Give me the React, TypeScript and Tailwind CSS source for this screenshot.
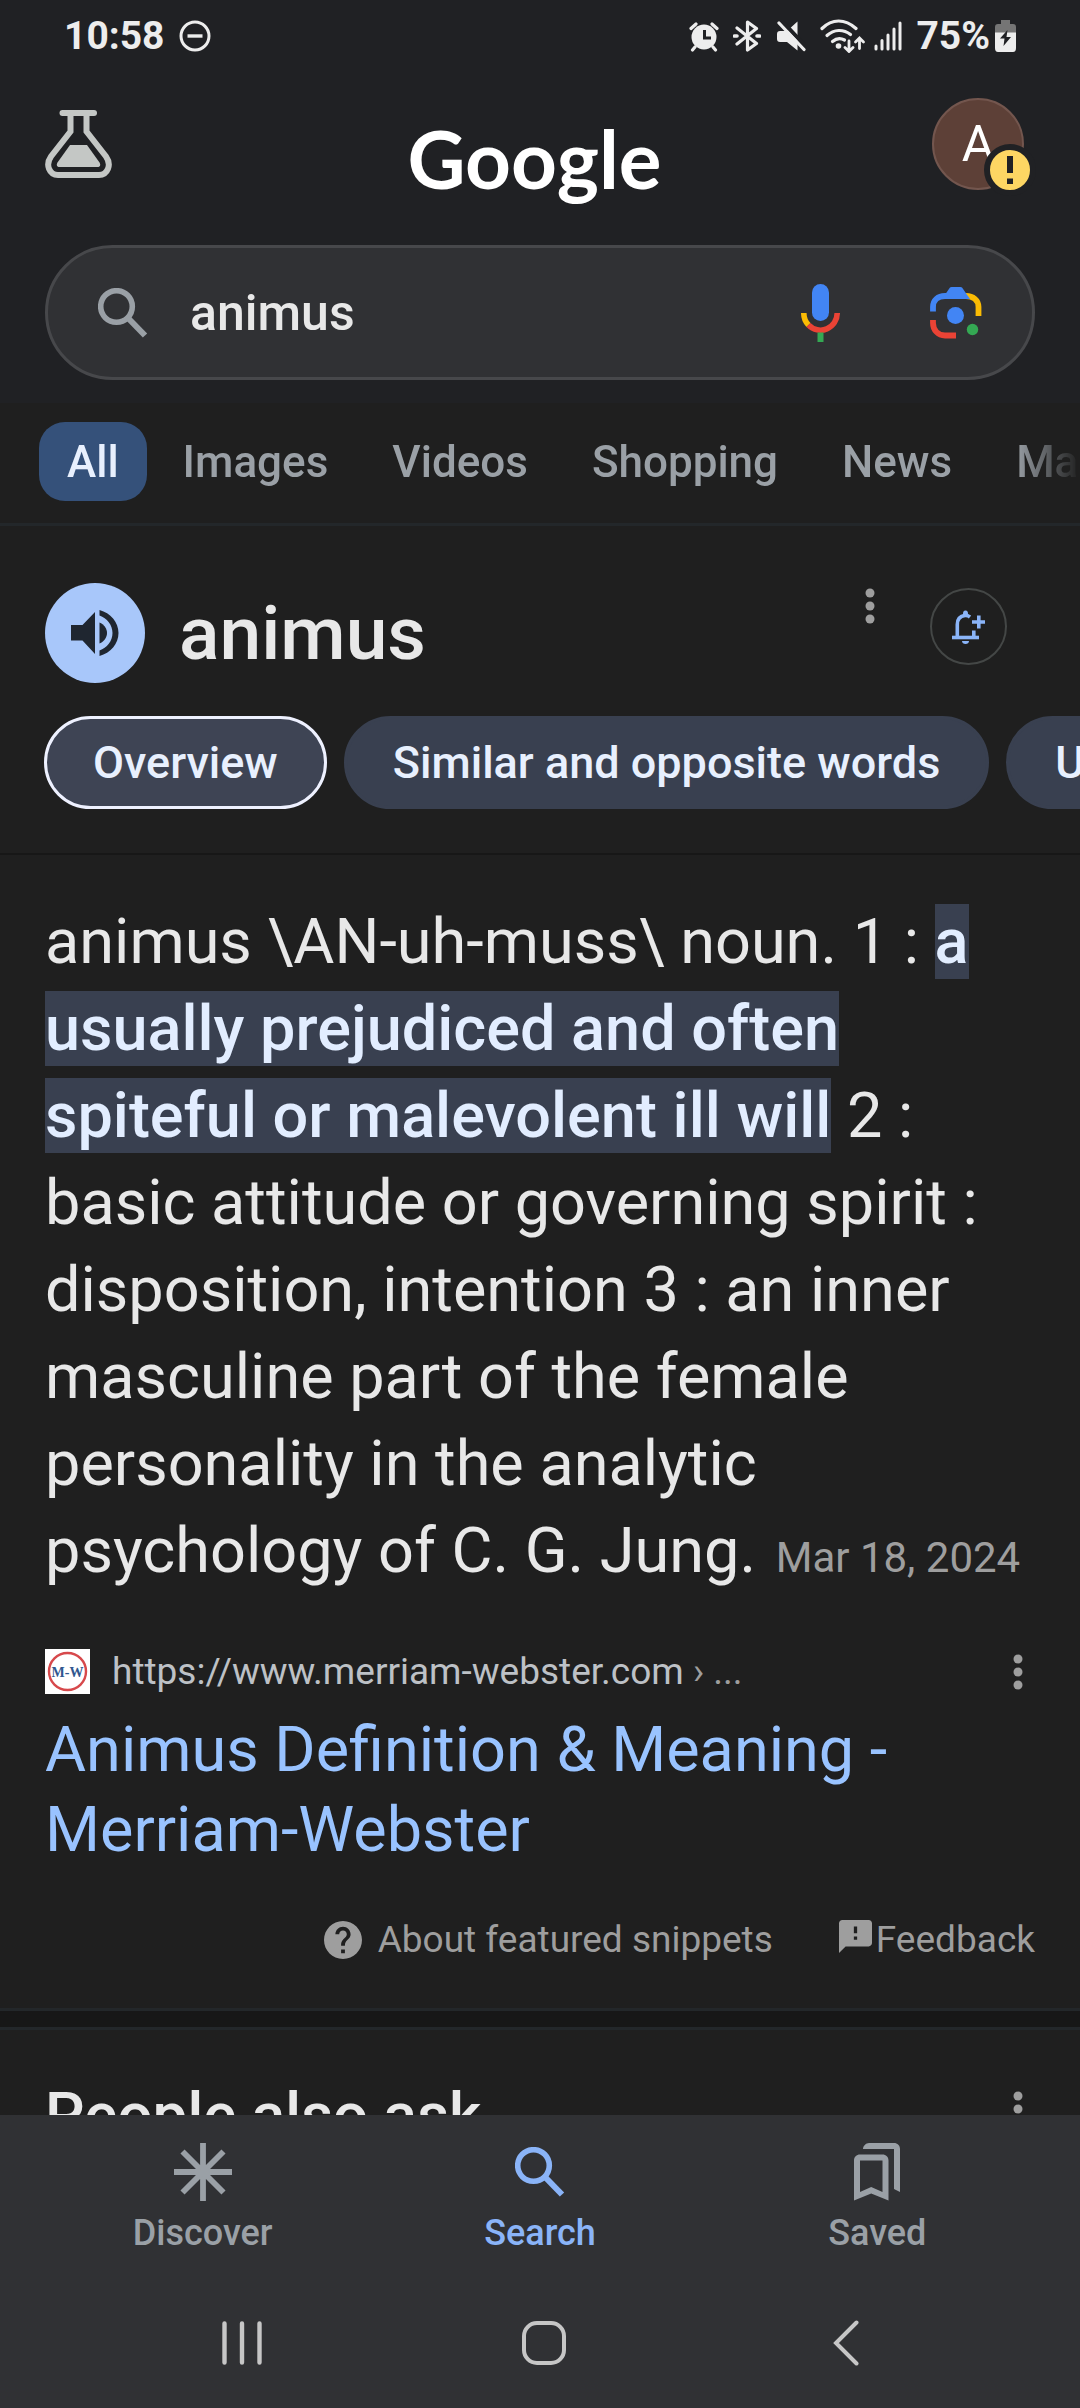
import type { ReactNode } from 'react';

const tabs = ['All', 'Images', 'Videos', 'Shopping', 'News', 'Maps'];
const chips = ['Overview', 'Similar and opposite words', 'Usage examples'];

function MoreDots() {
  return (
    <svg width="10" height="36" viewBox="0 0 10 36" fill="#9e9e9e" aria-hidden="true">
      <circle cx="5" cy="5" r="4.5" />
      <circle cx="5" cy="18" r="4.5" />
      <circle cx="5" cy="31" r="4.5" />
    </svg>
  );
}

function SearchIcon() {
  return (
    <svg width="50" height="50" viewBox="0 0 50 50" fill="none" stroke="currentColor" aria-hidden="true">
      <circle cx="18.5" cy="18.5" r="15.8" strokeWidth="5.6" />
      <path d="M30 30l17 17.5" strokeWidth="6" />
    </svg>
  );
}

function FlaskIcon() {
  return (
    <svg width="67" height="68" viewBox="0 0 67 68" fill="none" aria-hidden="true">
      <path
        d="M25.5 5V21.5L6 46.5C0 55 4.5 65 13 65H54C62.5 65 67 55 61 46.5L41.5 21.5V5"
        stroke="#c4c7c5"
        strokeWidth="6"
      />
      <path d="M17.5 3H49" stroke="#c4c7c5" strokeWidth="6" strokeLinecap="round" />
      <path d="M25 35H42L54.5 52.5C56 55 55 57 52.5 57H14.5C12 57 11 55 12.5 52.5Z" fill="#c4c7c5" />
    </svg>
  );
}

function MicIcon() {
  return (
    <svg width="39" height="58" viewBox="0 0 39 58" fill="none" aria-hidden="true">
      <rect x="11" y="0" width="17" height="37" rx="8.5" fill="#4285f4" />
      <path d="M2.8 29A16.7 17 0 0 0 7.5 41" stroke="#fbbc04" strokeWidth="5.6" />
      <path d="M7.5 41A16.7 17 0 0 0 36.2 29" stroke="#ea4335" strokeWidth="5.6" />
      <path d="M19.5 48.5V58" stroke="#34a853" strokeWidth="6" />
    </svg>
  );
}

function LensIcon() {
  return (
    <svg width="52" height="52" viewBox="0 0 52 52" fill="none" aria-hidden="true">
      <path d="M36 9C43 9 48.5 13 48.5 20V29" stroke="#fbbc04" strokeWidth="5.8" />
      <path d="M3 24.5V20C3 13 8 9 15 9H17" stroke="#4285f4" strokeWidth="5.8" />
      <path d="M12 12L20 0.5Q20.5 0 21.5 0H30.5Q31.5 0 32 0.5L40 12Z" fill="#4285f4" />
      <path d="M3 33V36C3 43 8 48.5 15 48.5H26" stroke="#ea4335" strokeWidth="5.8" />
      <circle cx="25.5" cy="28.5" r="8.5" fill="#4285f4" />
      <circle cx="42.5" cy="42.5" r="5.7" fill="#34a853" />
    </svg>
  );
}

function StatusIcons() {
  return (
    <div className="flex items-center text-[#ededed]">
      <svg width="30" height="32" viewBox="0 0 30 32" fill="none" stroke="currentColor" aria-label="Alarm">
        <circle cx="15" cy="17" r="12.5" fill="currentColor" stroke="none" />
        <path d="M2 8.5L7 4M28 8.5L23 4" strokeWidth="3.2" strokeLinecap="round" />
        <path d="M6 27L3.5 30M24 27L26.5 30" strokeWidth="3.2" strokeLinecap="round" />
        <path d="M15.5 10V18H22" stroke="#202124" strokeWidth="3" />
      </svg>
      <svg className="ml-[14px]" width="28" height="32" viewBox="0 0 28 32" fill="none" stroke="currentColor" aria-label="Bluetooth">
        <path
          d="M4 8L23.5 23.5L14.5 30V2L23.5 8.5L4 24"
          strokeWidth="3.2"
          strokeLinecap="round"
          strokeLinejoin="round"
        />
        <path d="M1.5 16H4M24 16H26.5" strokeWidth="3.6" strokeLinecap="round" />
      </svg>
      <svg className="ml-[15px]" width="30" height="32" viewBox="0 0 30 32" aria-label="Muted">
        <path d="M21.5 1.5V30.5L11 22H4Q1 22 1 19V14Q1 11 4 11H11Z" fill="currentColor" />
        <path d="M3 -2L34 31" stroke="#202124" strokeWidth="4" />
        <path d="M3 3L28 29.5" stroke="currentColor" strokeWidth="3.2" strokeLinecap="round" />
      </svg>
      <svg className="ml-[14px]" width="46" height="34" viewBox="0 0 46 34" fill="none" stroke="currentColor" strokeLinecap="round" aria-label="Wi-Fi">
        <path d="M2 9.5C12 -0.5 25 -0.5 36 9.5" strokeWidth="3.2" />
        <path d="M7 16.5C14 10 23.5 10 30.5 15.5" strokeWidth="3.2" />
        <path d="M12.5 22.5C16.5 19 21 19 24.5 21" strokeWidth="3.2" />
        <circle cx="18.5" cy="27" r="2.8" fill="currentColor" stroke="none" />
        <path d="M29 22V32M25 28.5L29 32.5L33 28.5" strokeWidth="2.8" />
        <path d="M39.5 29.5V20M35.5 23L39.5 19L43.5 23" strokeWidth="2.8" />
      </svg>
      <svg className="ml-[8px]" width="28" height="32" viewBox="0 0 28 32" stroke="currentColor" strokeWidth="3" strokeLinecap="round" aria-label="Signal">
        <path d="M2 26V29M8 20.5V29M14 15V29M20 9V29M26 3V29" />
      </svg>
      <span className="ml-[14px] text-[39px] leading-[40px] font-bold">75%</span>
      <svg className="ml-[5px]" width="21" height="32" viewBox="0 0 21 32" aria-label="Charging">
        <path d="M6 0H15V4H18Q21 4 21 7V13H0V7Q0 4 3 4H6Z" fill="#757575" />
        <path d="M0 12.5H21V28Q21 32 18 32H3Q0 32 0 28Z" fill="currentColor" />
        <path d="M12.5 10L5 18.5H9.5L8.5 26L16 17H11.5Z" fill="#202124" />
      </svg>
    </div>
  );
}

function NavItem({ label, active, children }: { label: string; active?: boolean; children: ReactNode }) {
  return (
    <a
      href="#"
      className={`flex flex-1 flex-col items-center gap-3 ${active ? 'text-[#8ab4f8]' : 'text-[#9aa0a6]'}`}
    >
      <span className="flex h-[58px] items-center">{children}</span>
      <span className="text-[36px] leading-[40px] font-medium">{label}</span>
    </a>
  );
}

export default function App() {
  return (
    <div className="flex h-screen flex-col overflow-hidden bg-[#1f1f1f] font-['Roboto',sans-serif] text-[#e8e8e8]">
      <header className="shrink-0 bg-[#202124] pb-[23px]">
        <div className="flex h-[72px] items-center justify-between px-[64px]">
          <div className="flex items-center gap-[14px]">
            <span className="text-[39px] leading-[40px] font-bold text-[#ededed]">10:58</span>
            <svg width="32" height="32" viewBox="0 0 32 32" fill="none" stroke="#ededed" aria-label="Do not disturb">
              <circle cx="16" cy="16" r="14" strokeWidth="3" />
              <path d="M8.5 16H23.5" strokeWidth="3.4" />
            </svg>
          </div>
          <StatusIcons />
        </div>

        <div className="grid h-[144px] grid-cols-[1fr_auto_1fr] items-center pr-[56px] pl-[45px]">
          <button type="button" aria-label="Search Labs" className="justify-self-start">
            <FlaskIcon />
          </button>
          <h1 className="pt-7 font-['Lato',sans-serif] text-[80px] leading-[94px] font-bold text-white">Google</h1>
          <button
            type="button"
            aria-label="Account"
            className="relative flex size-[92px] items-center justify-center justify-self-end rounded-full border-2 border-[#73564e] bg-[#5d4037] text-[50px] leading-none text-white"
          >
            A
            <span className="absolute -right-[14px] -bottom-[8px] flex size-[52px] items-center justify-center rounded-full border-[6px] border-[#202124] bg-[#fdd663]">
              <svg width="6" height="28" viewBox="0 0 6 28" fill="#202124" aria-hidden="true">
                <path d="M0 0H6V17H0ZM0 22.5H6V28H0Z" />
              </svg>
            </span>
          </button>
        </div>

        <form
          role="search"
          className="mx-[45px] mt-[29px] flex h-[135px] items-center rounded-full border-[3px] border-[#47484b] bg-[#303134] px-[50px]"
        >
          <label htmlFor="q" aria-label="Search" className="text-[#9aa0a6]">
            <SearchIcon />
          </label>
          <input
            id="q"
            type="text"
            defaultValue="animus"
            className="ml-[42px] min-w-0 flex-1 bg-transparent text-[50px] leading-[60px] font-medium text-[#e8e8e8] outline-none"
          />
          <button type="button" aria-label="Voice search">
            <MicIcon />
          </button>
          <button type="button" aria-label="Google Lens" className="ml-[90px]">
            <LensIcon />
          </button>
        </form>
      </header>

      <main className="min-h-0 flex-1 overflow-hidden">
        <nav className="border-b-[3px] border-[#23272a]">
          <div className="flex gap-2 overflow-hidden [mask-image:linear-gradient(to_right,black_94%,transparent)] pt-[19px] pb-[22px] pl-[39px]">
            {tabs.map((tab, i) => (
              <a
                key={tab}
                href="#"
                className={`flex h-[79px] shrink-0 items-center rounded-[26px] px-[28px] text-[44px] leading-[52px] font-medium ${
                  i === 0 ? 'bg-[#35517a] text-[#e8f0fe]' : 'text-[#9aa0a6]'
                }`}
              >
                {tab}
              </a>
            ))}
          </div>
        </nav>

        <section className="border-b-2 border-[#171717] pt-[57px] pb-[44px]">
          <div className="flex items-start pr-[73px] pl-[45px]">
            <button
              type="button"
              aria-label="Listen"
              className="flex size-[100px] items-center justify-center rounded-full bg-[#a8c7fa]"
            >
              <svg width="48" height="46" viewBox="0 0 48 46" fill="#1f2630" aria-hidden="true">
                <path d="M0 15H11.5L24 2V44L11.5 30.5H0Z" />
                <path d="M28.5 12.5C33 14.5 36 18.5 36 23S33 31.5 28.5 33.5Z" />
                <path d="M28.5 0V5.5C36 8 41.5 15 41.5 23S36 38 28.5 40.5V46C39.5 43 47.5 34 47.5 23S39.5 3 28.5 0Z" />
              </svg>
            </button>
            <h2 className="ml-[34px] flex-1 text-[75px] leading-[100px] font-medium">animus</h2>
            <button type="button" aria-label="More options" className="mt-[5px]">
              <MoreDots />
            </button>
            <button
              type="button"
              aria-label="Follow"
              className="mt-[5px] ml-[55px] flex size-[77px] items-center justify-center rounded-full border-2 border-[#444746]"
            >
              <svg width="33" height="34" viewBox="0 0 33 34" fill="none" stroke="#8ab4f8" strokeWidth="3.6" aria-hidden="true">
                <path d="M0 27.5H27" />
                <path d="M5.3 27V14.5C5.3 9 8.5 6 13 5.5C15 5.3 16.5 5.8 18 7" />
                <path d="M13.5 0.5C15.5 0.5 16 2 16 4L18.5 7H9L11 4C11 2 11.5 0.5 13.5 0.5Z" fill="#8ab4f8" stroke="none" />
                <path d="M21.8 20.5V27" />
                <path d="M20 12H33M26.8 5.5V18.5" />
                <path d="M10 31H17C17 33 15.5 34 13.5 34S10 33 10 31Z" fill="#8ab4f8" stroke="none" />
              </svg>
            </button>
          </div>

          <div className="mt-[33px] flex gap-[17px] overflow-hidden pl-[44px]">
            {chips.map((chip, i) => (
              <button
                key={chip}
                type="button"
                className={`h-[93px] shrink-0 rounded-full border-[3px] px-[46px] text-[45px] leading-[52px] font-medium text-[#e8f0fe] ${
                  i === 0 ? 'border-[#eef1ff] bg-[#3e4454]' : 'border-[#394050] bg-[#394050]'
                }`}
              >
                {chip}
              </button>
            ))}
          </div>
        </section>

        <section className="border-b-[3px] border-[#23272a] px-[45px] pt-[43px] pb-[48px]">
          <p className="text-[63px] leading-[87px]">
            animus \AN-uh-muss\ noun. 1 :{' '}
            <mark className="bg-[#394050] py-px font-medium text-[#e2edff]">
              a usually prejudiced and often spiteful or malevolent ill will
            </mark>{' '}
            2 : basic attitude or governing spirit : disposition, intention 3 : an inner masculine part of the female
            personality in the analytic psychology of C. G. Jung.{' '}
            <span className="ml-1 text-[42px] leading-none whitespace-nowrap text-[#9e9e9e]">Mar 18, 2024</span>
          </p>

          <div className="mt-[55px] flex h-[45px] items-center">
            <svg width="45" height="45" viewBox="0 0 45 45" aria-hidden="true">
              <rect width="45" height="45" fill="#fff" />
              <circle cx="22.5" cy="22.5" r="18.5" fill="none" stroke="#d7494c" strokeWidth="2.4" />
              <text
                x="22.5"
                y="28"
                textAnchor="middle"
                fill="#30578f"
                fontFamily="Liberation Serif, serif"
                fontWeight="700"
                fontSize="14"
              >
                M-W
              </text>
            </svg>
            <cite className="ml-[22px] flex-1 text-[37px] leading-[45px] text-[#bdc1c6] not-italic">
              https://www.merriam-webster.com <span className="text-[#9e9e9e]">› ...</span>
            </cite>
            <button type="button" aria-label="About this result" className="mr-3">
              <MoreDots />
            </button>
          </div>
          <h3 className="mt-4 text-[63px] leading-[80px] text-[#99c3ff]">
            <a href="#">Animus Definition &amp; Meaning - Merriam-Webster</a>
          </h3>

          <div className="mt-[50px] flex items-center justify-end text-[37px] leading-[40px] text-[#9e9e9e]">
            <a href="#" className="flex items-center gap-4">
              <svg width="38" height="38" viewBox="2 2 20 20" fill="currentColor" aria-hidden="true">
                <path d="M12 2C6.48 2 2 6.48 2 12s4.48 10 10 10 10-4.48 10-10S17.52 2 12 2zm1 17h-2v-2h2v2zm2.07-7.75l-.9.92C13.45 12.9 13 13.5 13 15h-2v-.5c0-1.1.45-2.1 1.17-2.83l1.24-1.26c.37-.36.59-.86.59-1.41 0-1.1-.9-2-2-2s-2 .9-2 2H8c0-2.21 1.79-4 4-4s4 1.79 4 4c0 .88-.36 1.68-.93 2.25z" />
              </svg>
              About featured snippets
            </a>
            <a href="#" className="ml-[66px] flex items-start gap-1">
              <svg width="33" height="33" viewBox="2 2 20 20" fill="currentColor" aria-hidden="true">
                <path d="M20 2H4c-1.1 0-1.99.9-1.99 2L2 22l4-4h14c1.1 0 2-.9 2-2V4c0-1.1-.9-2-2-2zm-7 12h-2v-2h2v2zm0-4h-2V6h2v4z" />
              </svg>
              Feedback
            </a>
          </div>
        </section>

        <div className="h-4 bg-[#171717]" />

        <section className="flex items-start justify-between border-t-[3px] border-[#23272a] px-[45px] pt-[45px]">
          <h2 className="text-[62px] leading-[80px] font-medium">People also ask</h2>
          <button type="button" aria-label="More options" className="mt-4 mr-3">
            <MoreDots />
          </button>
        </section>
      </main>

      <footer className="shrink-0 bg-[#303134]">
        <nav className="flex px-[34px] pt-[28px]">
          <NavItem label="Discover">
            <svg width="58" height="58" viewBox="0 0 58 58" stroke="currentColor" strokeWidth="5.8" aria-hidden="true">
              <path d="M29 0V58M0 29H58M8.5 8.5L49.5 49.5M49.5 8.5L8.5 49.5" />
            </svg>
          </NavItem>
          <NavItem label="Search" active>
            <SearchIcon />
          </NavItem>
          <NavItem label="Saved">
            <svg width="46" height="58" viewBox="0 0 46 58" fill="currentColor" aria-hidden="true">
              <path d="M9 6C9 3 12 0 15 0H40C43.5 0 46 2.5 46 6V49L40 46V6Z" />
              <path
                fillRule="evenodd"
                d="M0 17.5C0 14 2.5 11.5 6 11.5H28.5C32 11.5 34.5 14 34.5 17.5V57.5L17.2 50.5L0 57.5ZM6 17.5V49L17.2 44L28.5 49V17.5Z"
              />
            </svg>
          </NavItem>
        </nav>
        <div className="mt-6 flex h-[131px] items-center pr-[83px] pl-[91px] text-[#c6c6c6]">
          <button type="button" aria-label="Recents" className="flex flex-1 justify-center">
            <svg width="40" height="44" viewBox="0 0 40 44" stroke="currentColor" strokeWidth="4.4" strokeLinecap="round">
              <path d="M2.5 2.5V41.5M20 2.5V41.5M37.5 2.5V41.5" />
            </svg>
          </button>
          <button type="button" aria-label="Home" className="flex flex-1 justify-center">
            <svg width="44" height="44" viewBox="0 0 44 44" fill="none" stroke="currentColor" strokeWidth="4">
              <rect x="2" y="2" width="40" height="40" rx="13" />
            </svg>
          </button>
          <button type="button" aria-label="Back" className="flex flex-1 justify-center">
            <svg width="26" height="46" viewBox="0 0 26 46" fill="none" stroke="currentColor" strokeWidth="4" strokeLinecap="round">
              <path d="M23.5 2.5L3 23L23.5 43.5" />
            </svg>
          </button>
        </div>
      </footer>
    </div>
  );
}
